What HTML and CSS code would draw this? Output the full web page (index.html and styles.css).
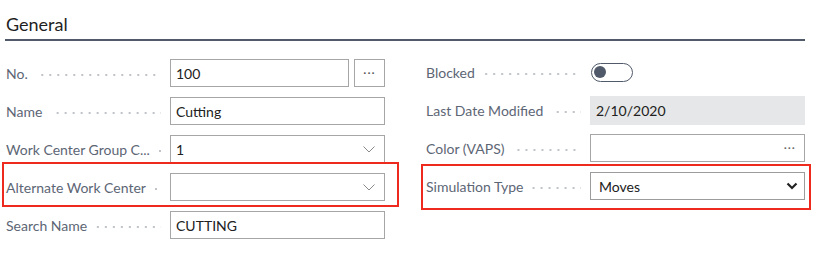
FILE: index.html
```html
<!DOCTYPE html>
<html>
<head>
<meta charset="utf-8">
<link rel="stylesheet" href="styles.css">
</head>
<body>
<div class="page">
  <h2 class="title">General</h2>
  <div class="grid">
    <div class="col col-left">
      <div class="row">
        <div class="lbl"><span class="txt">No.</span><span class="dots"></span></div>
        <div class="field">
          <div class="input grow">100</div>
          <div class="btn"><span class="ell">&middot;&middot;&middot;</span></div>
        </div>
      </div>
      <div class="row">
        <div class="lbl"><span class="txt">Name</span><span class="dots"></span></div>
        <div class="field"><div class="input grow">Cutting</div></div>
      </div>
      <div class="row">
        <div class="lbl"><span class="txt">Work Center Group C...</span><span class="dots"></span></div>
        <div class="field"><div class="input grow dd">1<svg class="chev" width="12" height="7" viewBox="0 0 12 7"><path d="M0.5 0.5 L6 6 L11.5 0.5" fill="none" stroke="#8a8a8a" stroke-width="1"/></svg></div></div>
      </div>
      <div class="row mark mark-left">
        <div class="lbl"><span class="txt">Alternate Work Center</span><span class="dots"></span></div>
        <div class="field"><div class="input grow dd"><svg class="chev" width="12" height="7" viewBox="0 0 12 7"><path d="M0.5 0.5 L6 6 L11.5 0.5" fill="none" stroke="#8a8a8a" stroke-width="1"/></svg></div></div>
      </div>
      <div class="row">
        <div class="lbl"><span class="txt">Search Name</span><span class="dots"></span></div>
        <div class="field"><div class="input grow">CUTTING</div></div>
      </div>
    </div>
    <div class="col col-right">
      <div class="row">
        <div class="lbl"><span class="txt">Blocked</span><span class="dots"></span></div>
        <div class="field"><div class="toggle"><span class="knob"></span></div></div>
      </div>
      <div class="row">
        <div class="lbl"><span class="txt">Last Date Modified</span><span class="dots"></span></div>
        <div class="field"><div class="input grow ro">2/10/2020</div></div>
      </div>
      <div class="row">
        <div class="lbl"><span class="txt">Color (VAPS)</span><span class="dots"></span></div>
        <div class="field"><div class="input grow dd"><span class="ell small">&middot;&middot;&middot;</span></div></div>
      </div>
      <div class="row mark mark-right">
        <div class="lbl"><span class="txt">Simulation Type</span><span class="dots"></span></div>
        <div class="field"><div class="input grow dd sel">Moves<svg class="chev2" width="12" height="8" viewBox="0 0 12 8"><path d="M1.5 1.5 L6 6 L10.5 1.5" fill="none" stroke="#222" stroke-width="2.2"/></svg></div></div>
      </div>
    </div>
  </div>
</div>
</body>
</html>
```
FILE: styles.css
```css
* { box-sizing: border-box; }
html, body { margin: 0; background: #ffffff; }
body {
  font-family: "Lato", "Noto Sans", "Liberation Sans", sans-serif;
  font-size: 14px;
  color: #212121;
}
.page {
  padding: 12px 11px 0 5px;
}
.title {
  margin: 0;
  font-weight: 400;
  font-size: 18px;
  line-height: 24px;
  color: #1f1f1f;
  padding: 0 0 3px 1px;
  border-bottom: 2px solid #505a6a;
}
.grid {
  display: grid;
  grid-template-columns: 380px 380px;
  column-gap: 40px;
  margin-top: 17px;
}
.col {
  display: flex;
  flex-direction: column;
  gap: 10px;
}
.col-left { margin-top: 1px; }
.row {
  display: flex;
  align-items: center;
  height: 28px;
}
.lbl {
  width: 165px;
  flex: none;
  display: flex;
  align-items: center;
  padding-left: 1px;
  padding-right: 9px;
  color: #5d6675;
  overflow: hidden;
}
.txt {
  white-space: nowrap;
  flex: none;
}
.dots {
  flex: 1;
  min-width: 8px;
  height: 2px;
  margin-top: 4px;
  margin-left: 9px;
  background-image: radial-gradient(circle at 1px 1px, #bfc2c7 0.7px, transparent 1px);
  background-size: 8px 2px;
  background-repeat: repeat-x;
  background-position: right 0 top 0;
}
.field {
  width: 215px;
  flex: none;
  display: flex;
  gap: 5px;
  height: 28px;
  align-items: center;
}
.input {
  height: 28px;
  border: 1px solid #a6a6a6;
  padding: 0 8px 0 5px;
  display: flex;
  align-items: center;
  color: #212121;
}
.grow { flex: 1; }
.dd { justify-content: space-between; }
.ro {
  border: none;
  background: #e6e7e8;
  height: 29px;
  margin-top: 1px;
  padding-left: 6px;
}
.btn {
  width: 31px;
  height: 28px;
  border: 1px solid #a6a6a6;
  display: flex;
  align-items: center;
  justify-content: center;
}
.ell {
  font-size: 12px;
  letter-spacing: 1px;
  color: #555;
  line-height: 1;
}
.small { margin-left: auto; color: #666; }
.chev { margin-left: auto; margin-right: 1px; }
.sel { padding-left: 8px; padding-right: 6px; border-color: #9c9c9c; }
.toggle {
  width: 42px;
  height: 19px;
  border: 1.5px solid #505a6a;
  border-radius: 10px;
  margin-left: 1px;
  display: flex;
  align-items: center;
  padding-left: 2px;
}
.knob {
  width: 12px;
  height: 12px;
  border-radius: 50%;
  background: #505a6a;
}
.mark { position: relative; }
.mark::after {
  content: "";
  position: absolute;
  border: 2px solid #ee2a1f;
  pointer-events: none;
}
.mark-left::after { top: -11px; bottom: -6px; left: -3px; right: -14px; }
.mark-right::after { top: -8px; bottom: -10px; left: -4px; right: -6px; }
```
